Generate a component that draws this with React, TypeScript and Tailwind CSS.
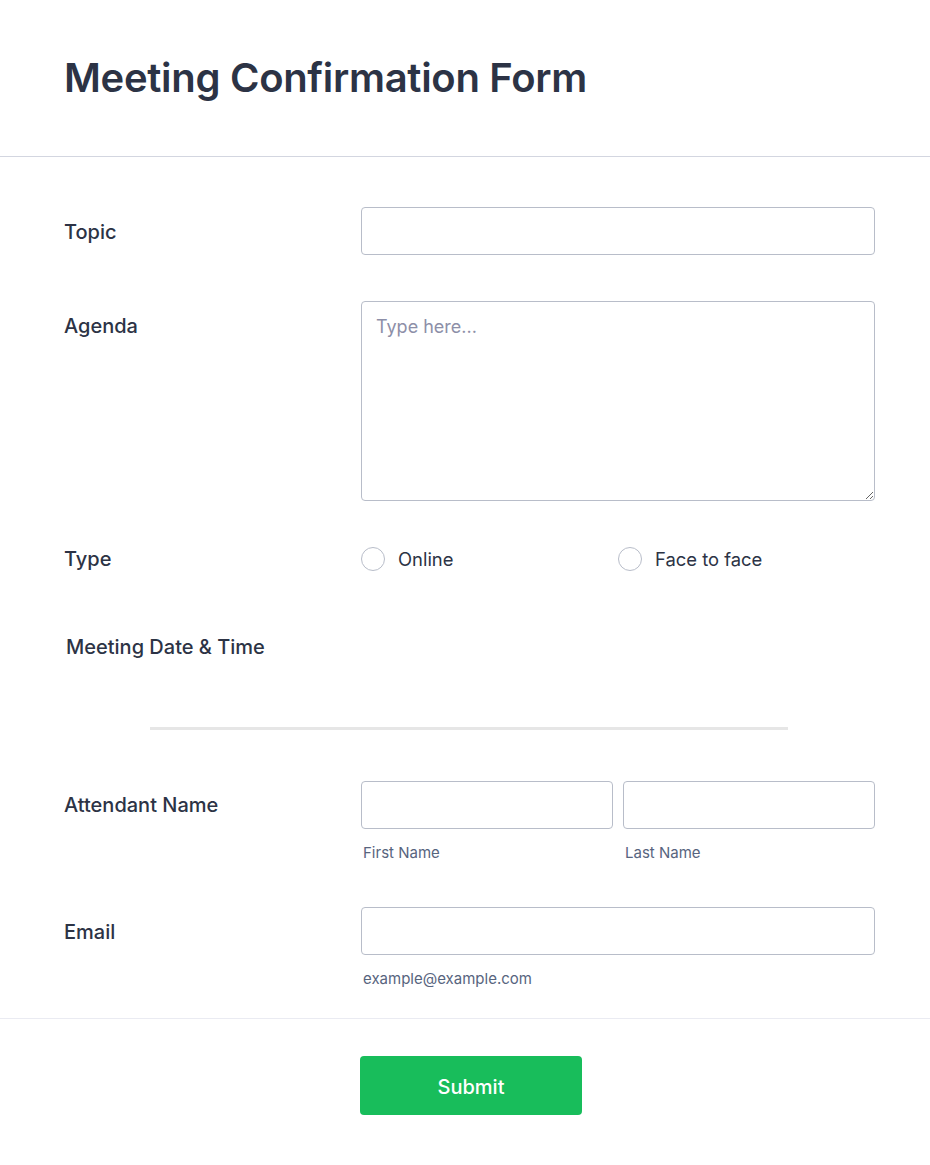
import React from "react";

const font = { fontFamily: "Inter, 'Noto Sans', sans-serif" };

function Row({ label, children, labelClass = "" }: { label: string; children: React.ReactNode; labelClass?: string }) {
  return (
    <div className="flex px-[64px]">
      <div className={"w-[297px] shrink-0 text-[20px] leading-[30px] font-medium text-[#2c3345] " + labelClass}>{label}</div>
      <div className="flex-1">{children}</div>
    </div>
  );
}

function Radio({ label }: { label: string }) {
  return (
    <label className="flex items-center gap-[13px]">
      <span className="w-[24px] h-[24px] rounded-full border border-[#b8bdc9] bg-white" />
      <span className="text-[18.4px] leading-[30px] text-[#2c3345]">{label}</span>
    </label>
  );
}

export default function App() {
  return (
    <div className="w-[930px] min-h-[1165px] bg-white" style={font}>
      <div className="px-[64px] pt-[53px] pb-[53px] border-b border-[#d3d6e0]">
        <h1 className="text-[40px] leading-[50px] font-semibold text-[#2c3345] tracking-[-0.3px]">Meeting Confirmation Form</h1>
      </div>

      <div className="pt-[50px]">
        <Row label="Topic" labelClass="pt-[10px]">
          <input className="block w-[514px] h-[48px] border border-[#b8bdc9] rounded-[4px] bg-white outline-none" />
        </Row>

        <div className="h-[46px]" />
        <Row label="Agenda" labelClass="pt-[10px]">
          <textarea
            placeholder="Type here..."
            className="block w-[514px] h-[200px] border border-[#b8bdc9] rounded-[4px] bg-white px-[14px] py-[12px] text-[18px] leading-[26px] text-[#2c3345] placeholder:text-[#8d8fa8] outline-none resize-y"
          />
        </Row>

        <div className="h-[43px]" />
        <Row label="Type">
          <div className="flex h-[30px] items-center">
            <div className="w-[257px]"><Radio label="Online" /></div>
            <Radio label="Face to face" />
          </div>
        </Row>

        <div className="px-[66px] pt-[58px] text-[20px] leading-[30px] font-medium text-[#2c3345]">Meeting Date &amp; Time</div>

        <div className="pt-[65px] flex pl-[150px]">
          <div className="w-[638px] h-[3px] bg-[#e6e6e6]" />
        </div>

        <div className="h-[51px]" />
        <Row label="Attendant Name" labelClass="pt-[9px]">
          <div className="flex gap-[10px] w-[514px]">
            <div className="flex-1">
              <input className="block w-full h-[48px] border border-[#b8bdc9] rounded-[4px] bg-white outline-none" />
              <div className="pt-[15px] pl-[2px] text-[15px] leading-[18px] text-[#57647e]">First Name</div>
            </div>
            <div className="flex-1">
              <input className="block w-full h-[48px] border border-[#b8bdc9] rounded-[4px] bg-white outline-none" />
              <div className="pt-[15px] pl-[2px] text-[15px] leading-[18px] text-[#57647e]">Last Name</div>
            </div>
          </div>
        </Row>

        <div className="h-[45px]" />
        <Row label="Email" labelClass="pt-[10px]">
          <input className="block w-[514px] h-[48px] border border-[#b8bdc9] rounded-[4px] bg-white outline-none" />
          <div className="pt-[15px] pl-[2px] text-[15px] leading-[18px] text-[#57647e]">example@example.com</div>
        </Row>

        <div className="mt-[30px] border-t border-[#eaebf2] pt-[37px] pb-[50px] pl-[360px]">
          <button className="block w-[222px] h-[59px] rounded-[4px] bg-[#18bd5b] text-white text-[20px] font-medium pt-[2px]">Submit</button>
        </div>
      </div>
    </div>
  );
}
